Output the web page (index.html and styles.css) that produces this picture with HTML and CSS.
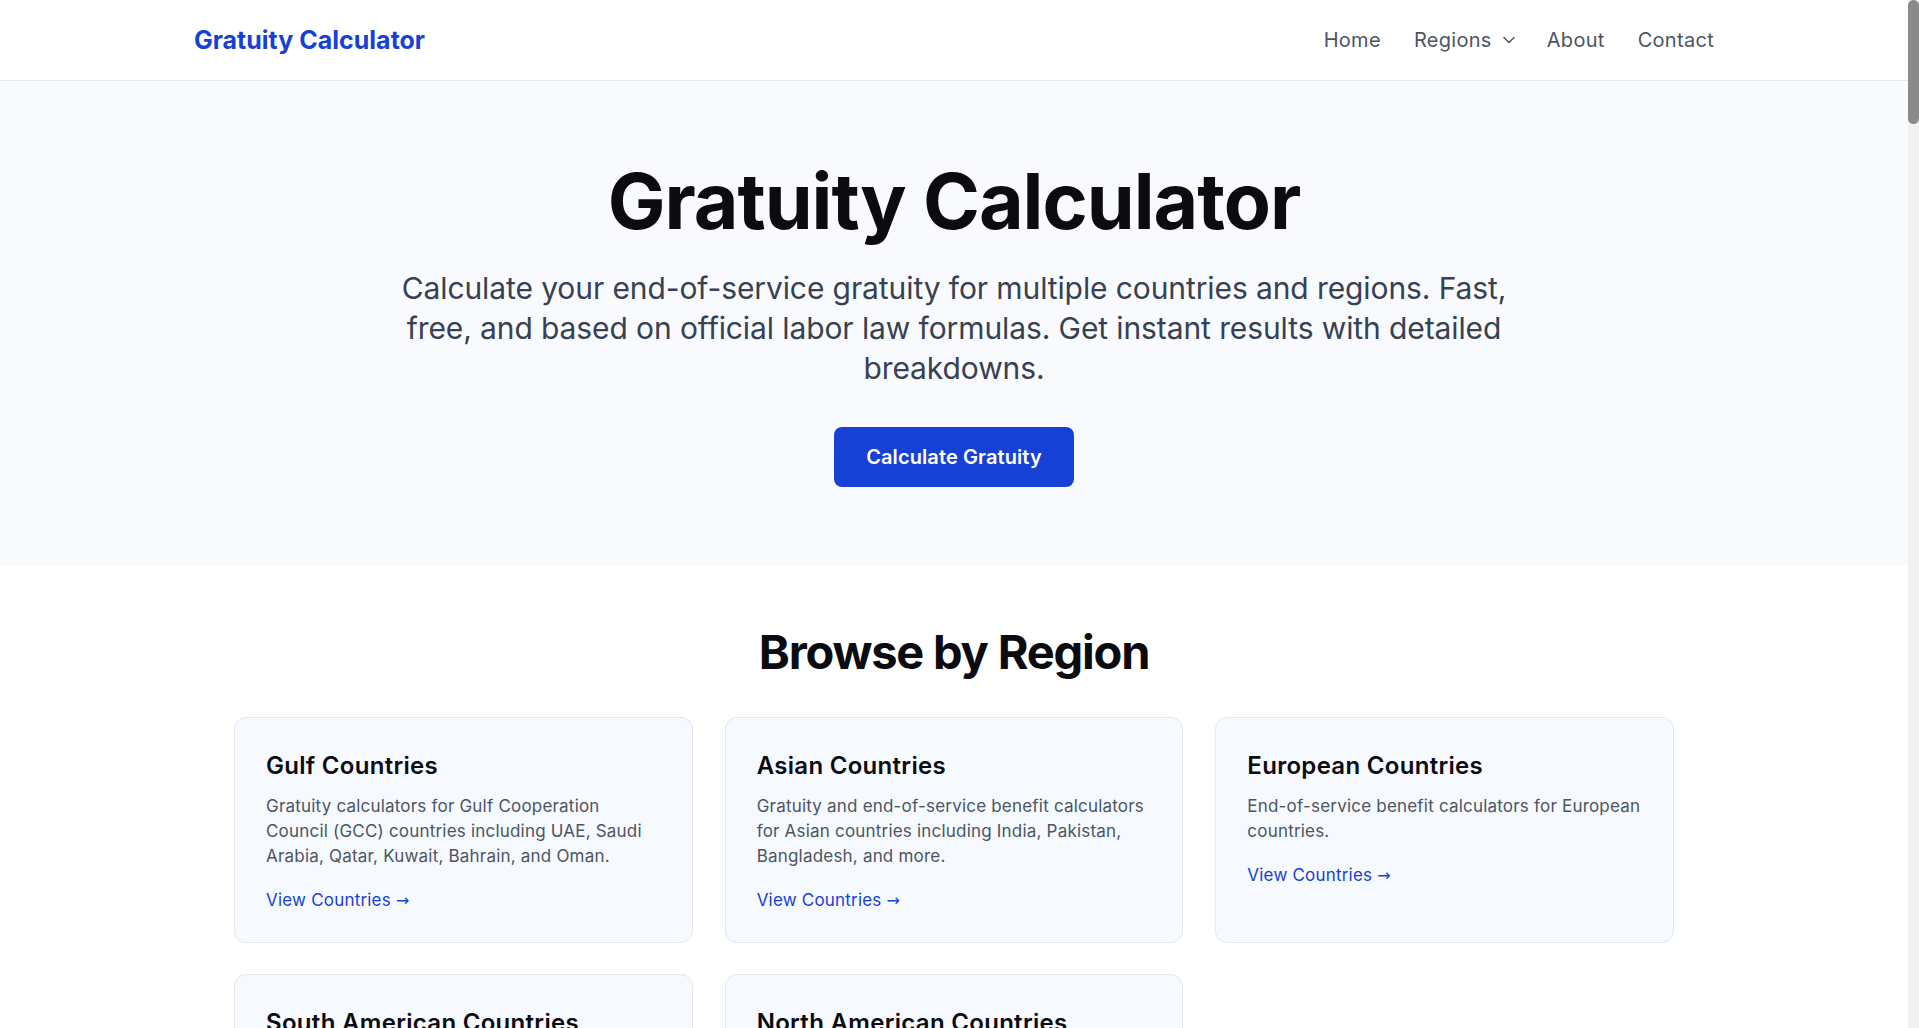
FILE: index.html
```html
<!DOCTYPE html>
<html lang="en">
<head>
  <meta charset="UTF-8">
  <meta name="viewport" content="width=device-width, initial-scale=1.0">
  <title>Gratuity Calculator</title>
  <link rel="stylesheet" href="styles.css">
</head>
<body>
  <header class="site-header">
    <div class="header-inner">
      <a href="#" class="logo">Gratuity Calculator</a>
      <nav class="main-nav">
        <a href="#">Home</a>
        <a href="#" class="has-dropdown">Regions
          <svg class="chevron" width="20" height="20" viewBox="0 0 24 24" fill="none" stroke="currentColor" stroke-width="1.8" stroke-linecap="round" stroke-linejoin="round"><path d="M6 9l6 6 6-6"/></svg>
        </a>
        <a href="#">About</a>
        <a href="#">Contact</a>
      </nav>
    </div>
  </header>

  <section class="hero">
    <h1>Gratuity Calculator</h1>
    <p class="hero-text">Calculate your end-of-service gratuity for multiple countries and regions. Fast, free, and based on official labor law formulas. Get instant results with detailed breakdowns.</p>
    <a href="#" class="cta-btn">Calculate Gratuity</a>
  </section>

  <section class="regions">
    <h2>Browse by Region</h2>
    <div class="region-grid">
      <div class="region-card">
        <h3>Gulf Countries</h3>
        <p>Gratuity calculators for Gulf Cooperation Council (GCC) countries including UAE, Saudi Arabia, Qatar, Kuwait, Bahrain, and Oman.</p>
        <a href="#">View Countries <span class="arrow">&rarr;</span></a>
      </div>
      <div class="region-card">
        <h3>Asian Countries</h3>
        <p>Gratuity and end-of-service benefit calculators for Asian countries including India, Pakistan, Bangladesh, and more.</p>
        <a href="#">View Countries <span class="arrow">&rarr;</span></a>
      </div>
      <div class="region-card">
        <h3>European Countries</h3>
        <p>End-of-service benefit calculators for European countries.</p>
        <a href="#">View Countries <span class="arrow">&rarr;</span></a>
      </div>
      <div class="region-card">
        <h3>South American Countries</h3>
        <p>Severance and end-of-service benefit calculators for South American countries.</p>
        <a href="#">View Countries <span class="arrow">&rarr;</span></a>
      </div>
      <div class="region-card">
        <h3>North American Countries</h3>
        <p>Severance pay calculators for North American countries.</p>
        <a href="#">View Countries <span class="arrow">&rarr;</span></a>
      </div>
    </div>
  </section>

  <div class="scrollbar"><div class="scrollbar-thumb"></div></div>
</body>
</html>
```

FILE: styles.css
```css
* {
  margin: 0;
  padding: 0;
  box-sizing: border-box;
}

body {
  font-family: Inter, "Noto Sans", sans-serif;
  background-color: #fff;
  color: #0b0b10;
  margin-right: 11px;
}

a {
  text-decoration: none;
}

/* fake browser scrollbar, the reference shows one */
.scrollbar {
  position: fixed;
  top: 0;
  right: 0;
  width: 11px;
  height: 100vh;
  background-color: #f1f1f1;
}

.scrollbar-thumb {
  height: 124px;
  background-color: #8a8a8a;
  border-radius: 6px;
}

.site-header {
  height: 81px;
  border-bottom: 1px solid #e5e7eb;
  background-color: #fff;
}

.header-inner {
  max-width: 1536px;
  height: 100%;
  margin: 0 auto;
  padding: 0 8px;
  display: flex;
  align-items: center;
  justify-content: space-between;
}

.logo {
  font-size: 25px;
  font-weight: 700;
  color: #1741d4;
}

.main-nav {
  display: flex;
  align-items: center;
  gap: 33px;
}

.main-nav a {
  font-size: 20px;
  letter-spacing: 0.3px;
  color: #4b5563;
  display: flex;
  align-items: center;
}

.main-nav .chevron {
  margin-left: 7px;
  margin-right: -5px;
}

.hero {
  background-color: #f8fafd;
  padding: 82px 20px 79px;
  text-align: center;
}

.hero h1 {
  font-size: 77px;
  line-height: 1;
  font-weight: 700;
  letter-spacing: -1px;
  color: #0b0b10;
  margin-bottom: 28px;
}

.hero-text {
  max-width: 1120px;
  margin: 0 auto 39px;
  font-size: 30px;
  line-height: 40px;
  color: #374151;
  letter-spacing: -0.1px;
}

.cta-btn {
  display: inline-block;
  background-color: #1741d4;
  color: #fff;
  font-size: 20px;
  line-height: 28px;
  font-weight: 600;
  padding: 16px 32px;
  border-radius: 8px;
  letter-spacing: 0.1px;
}

.regions {
  max-width: 1440px;
  margin: 0 auto;
  padding: 58px 0 60px;
}

.regions h2 {
  text-align: center;
  font-size: 47px;
  line-height: 56px;
  font-weight: 700;
  letter-spacing: -1.2px;
  margin-bottom: 37px;
}

.region-grid {
  display: grid;
  grid-template-columns: repeat(3, 1fr);
  gap: 31px 32px;
}

.region-card {
  background-color: #f6f9fe;
  border: 1px solid #e4e7ec;
  border-radius: 12px;
  padding: 33px 30px 29px 31px;
}

.region-card h3 {
  font-size: 24px;
  line-height: 30px;
  font-weight: 600;
  letter-spacing: 0.3px;
  color: #0b0b10;
  margin-bottom: 13px;
}

.region-card p {
  font-size: 17px;
  line-height: 25px;
  letter-spacing: 0.2px;
  color: #4b5563;
  margin-bottom: 19px;
}

.region-card a {
  font-size: 17px;
  line-height: 25px;
  letter-spacing: 0.2px;
  color: #1741d4;
}

.region-card .arrow {
  font-family: "DejaVu Sans", sans-serif;
  font-size: 16px;
}
```
